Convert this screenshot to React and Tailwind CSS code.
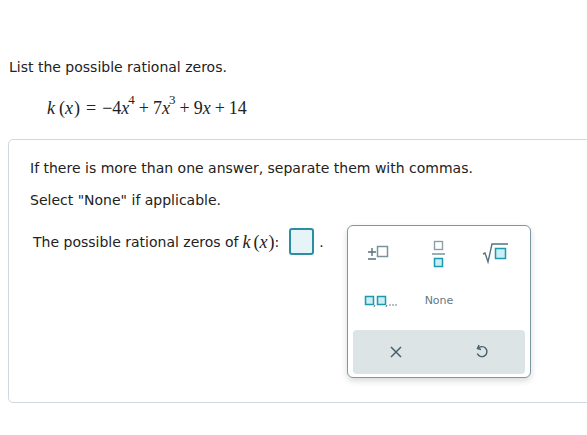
export default function App() {
  const serif = { fontFamily: '"Liberation Serif", serif' };
  return (
    <div className="w-[587px] h-[435px] overflow-hidden bg-white text-[14px] leading-[20px] text-[#222]" style={{ fontFamily: '"DejaVu Sans", Verdana, sans-serif' }}>
      <div className="pt-[57px] pl-[9px]">List the possible rational zeros.</div>

      <div className="pl-[47px] mt-[18px] h-[24px] flex items-end text-[18px] leading-[22px] text-[#222]" style={serif}>
        <i>k</i>
        <span className="ml-[4px]">(</span>
        <i>x</i>
        <span className="ml-[1px]">)</span>
        <span className="mx-[6px]">=</span>
        <span>−4</span>
        <i>x</i>
        <span className="text-[13px] self-start mt-[-6px] ml-[-1px]">4</span>
        <span className="mx-[4px]">+</span>
        <span>7</span>
        <i>x</i>
        <span className="text-[13px] self-start mt-[-6px] ml-[-1px]">3</span>
        <span className="mx-[4px]">+</span>
        <span>9</span>
        <i>x</i>
        <span className="mx-[4px]">+</span>
        <span>14</span>
      </div>

      <div className="ml-[8px] mt-[20px] w-[600px] h-[264px] border border-[#cfd8dc] rounded-[5px] pl-[21px] pt-[18px]">
        <div>If there is more than one answer, separate them with commas.</div>
        <div className="mt-[12px]">Select "None" if applicable.</div>

        <div className="flex items-start mt-[15px]">
          <div className="w-[317px] flex items-center pl-[3px] pt-[3px]">
            <span>The possible rational zeros of</span>
            <span className="ml-[4px] text-[18px]" style={serif}>
              <i>k</i>
              <span className="ml-[3px]">(</span>
              <i>x</i>
              <span className="ml-[1px]">)</span>
            </span>
            <span>:</span>
            <div className="ml-[10px] w-[25px] h-[27px] border-2 border-[#2a8fa0] bg-[#e6f4f8] rounded-[3px]" />
            <span className="ml-[5px]">.</span>
          </div>

          <div className="w-[184px] h-[153px] border border-[#7c98a4] rounded-[6px] bg-white shadow-[0_3px_6px_rgba(0,0,0,0.15)] px-[5px] pt-[12px]">
            <div className="grid grid-cols-3 h-[36px] items-center justify-items-center">
              <svg width="26" height="20" viewBox="0 0 26 20" className="mr-[10px] mt-[-6px]">
                <path d="M4 9h8M8 5v8M4 16h8" stroke="#56737e" strokeWidth="1.4" fill="none" />
                <rect x="13.5" y="3.5" width="10" height="10" fill="white" stroke="#7a939d" strokeWidth="1.5" />
              </svg>
              <svg width="14" height="32" viewBox="0 0 14 32">
                <rect x="2.5" y="1.5" width="8" height="8" fill="white" stroke="#8ba1a9" strokeWidth="1.4" />
                <path d="M0 14h13" stroke="#7a939d" strokeWidth="1.5" />
                <rect x="2.5" y="18.5" width="8" height="8" fill="#c9eef4" stroke="#1f99ad" strokeWidth="1.5" />
              </svg>
              <svg width="28" height="24" viewBox="0 0 28 24" className="mt-[-6px]">
                <path d="M1 13l2-1 3 9 4-18h16" stroke="#56737e" strokeWidth="1.4" fill="none" />
                <rect x="13.5" y="7.5" width="10" height="10" fill="#c9eef4" stroke="#1f99ad" strokeWidth="1.5" />
              </svg>
            </div>
            <div className="grid grid-cols-3 h-[36px] mt-[9px] items-center justify-items-center">
              <svg width="38" height="14" viewBox="0 0 38 14">
                <rect x="2.5" y="2.5" width="8" height="8" fill="#c9eef4" stroke="#1f99ad" strokeWidth="1.5" />
                <path d="M12 11l-1 2" stroke="#56737e" strokeWidth="1" />
                <rect x="14.5" y="2.5" width="8" height="8" fill="#c9eef4" stroke="#1f99ad" strokeWidth="1.5" />
                <path d="M24 11l-1 2" stroke="#56737e" strokeWidth="1" />
                <circle cx="27" cy="11" r="0.8" fill="#56737e" />
                <circle cx="30" cy="11" r="0.8" fill="#56737e" />
                <circle cx="33" cy="11" r="0.8" fill="#56737e" />
              </svg>
              <span className="text-[11px] text-[#5f7a85]">None</span>
              <span />
            </div>
            <div className="mt-[11px] h-[44px] bg-[#dde4e6] rounded-[4px] grid grid-cols-2 items-center justify-items-center">
              <svg width="14" height="14" viewBox="0 0 14 14">
                <path d="M2 2l10 10M12 2L2 12" stroke="#46606a" strokeWidth="1.5" />
              </svg>
              <svg width="14" height="16" viewBox="0 0 14 16">
                <path d="M4 1L2.5 4.5 6 5.5" stroke="#46606a" strokeWidth="1.4" fill="none" />
                <path d="M3 4.5A5 5 0 1 1 2.3 9.5" stroke="#46606a" strokeWidth="1.4" fill="none" />
              </svg>
            </div>
          </div>
        </div>
      </div>
    </div>
  );
}
